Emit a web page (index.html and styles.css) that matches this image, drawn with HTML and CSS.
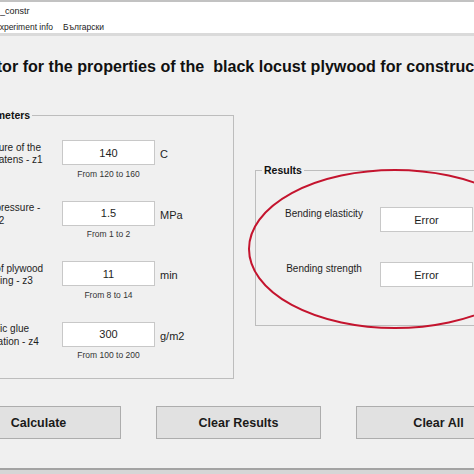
FILE: index.html
```html
<!DOCTYPE html>
<html>
<head>
<meta charset="utf-8">
<link rel="stylesheet" href="styles.css">
</head>
<body>
<div class="titlebar">
  <div class="apptitle">_constr</div>
  <div class="menubar"><span class="menuitem first">Experiment info</span><span class="menuitem">Български</span></div>
</div>
<div class="panel">
  <div class="window">
    <h1 class="heading">Calculator for the properties of the&nbsp; black locust plywood for construction</h1>
    <div class="groups">
      <fieldset class="group params">
        <legend>Parameters</legend>
        <div class="rows">
          <div class="row">
            <div class="lbl"><span>Temperature of the</span><span>heating platens - z1</span></div>
            <div class="field"><div class="box">140</div><div class="hint">From 120 to 160</div></div>
            <div class="unit">C</div>
          </div>
          <div class="row">
            <div class="lbl"><span>Specific pressure -</span><span>z2</span></div>
            <div class="field"><div class="box">1.5</div><div class="hint">From 1 to 2</div></div>
            <div class="unit">MPa</div>
          </div>
          <div class="row">
            <div class="lbl"><span>Duration of plywood</span><span>processing - z3</span></div>
            <div class="field"><div class="box">11</div><div class="hint">From 8 to 14</div></div>
            <div class="unit">min</div>
          </div>
          <div class="row">
            <div class="lbl"><span>Phenolic glue</span><span>concentration - z4</span></div>
            <div class="field"><div class="box">300</div><div class="hint">From 100 to 200</div></div>
            <div class="unit">g/m2</div>
          </div>
        </div>
      </fieldset>
      <fieldset class="group results">
        <legend>Results</legend>
        <div class="rrows">
          <div class="rrow">
            <div class="rlbl">Bending elasticity</div>
            <div class="box">Error</div>
          </div>
          <div class="rrow">
            <div class="rlbl">Bending strength</div>
            <div class="box">Error</div>
          </div>
        </div>
      </fieldset>
    </div>
    <div class="buttons">
      <div class="btn">Calculate</div>
      <div class="btn">Clear Results</div>
      <div class="btn">Clear All</div>
    </div>
  </div>
</div>
<svg class="annot" width="474" height="474" viewBox="0 0 474 474">
  <ellipse cx="395" cy="249" rx="146" ry="79" fill="none" stroke="#c4142e" stroke-width="2"/>
</svg>
</body>
</html>
```
FILE: styles.css
```css
html, body {
  margin: 0;
  padding: 0;
}
body {
  width: 474px;
  height: 474px;
  overflow: hidden;
  position: relative;
  background: #d6d6d6;
  font-family: "Liberation Sans", Arial, sans-serif;
  color: #1e1e1e;
}
.titlebar {
  background: #ffffff;
  border-top: 2px solid #c2c2c2;
  border-bottom: 3px solid #dadada;
  padding-top: 3px;
  box-sizing: content-box;
  height: 28px;
}
.apptitle {
  font-size: 9px;
  line-height: 12px;
  color: #222;
  white-space: nowrap;
}
.menubar {
  margin-top: 4px;
  font-size: 8.5px;
  line-height: 12px;
  color: #222;
  white-space: nowrap;
  display: flex;
  gap: 10px;
}
.menuitem.first {
  margin-left: -6px;
}
.panel {
  height: 432px;
  background: #f0f0f0;
  border-bottom: 2px solid #a3a3a3;
  overflow: hidden;
}
.window {
  margin-left: -54px;
  width: 620px;
}
.heading {
  margin: 20.5px 0 0 -6.5px;
  font-size: 16.1px;
  font-weight: bold;
  line-height: 18px;
  white-space: nowrap;
  color: #111;
}
.groups {
  display: flex;
  align-items: flex-start;
  margin-top: 34.5px;
}
.group {
  margin: 0;
  border: 1px solid #bdbdbd;
  box-sizing: border-box;
  min-width: 0;
}
.group legend {
  margin-left: 6px;
  padding: 0 2px;
  font-size: 10.5px;
  font-weight: bold;
  line-height: 12px;
  color: #111;
}
.params {
  width: 268px;
  margin-left: 20px;
  padding: 19px 0 18px 0;
}
.params legend {
  margin-left: 4px;
}
.results {
  width: 240px;
  margin-left: 21px;
  margin-top: 55px;
  padding: 31px 0 38px 0;
}
.rows {
  display: flex;
  flex-direction: column;
  gap: 22px;
}
.row {
  display: flex;
  align-items: flex-start;
  margin-left: -18px;
}
.lbl {
  width: 100px;
  height: 25px;
  margin-right: 13px;
  padding-top: 3px;
  box-sizing: border-box;
  display: flex;
  flex-direction: column;
  justify-content: center;
  align-items: center;
  font-size: 10px;
  line-height: 12.5px;
  white-space: nowrap;
}
.field {
  width: 93px;
  display: flex;
  flex-direction: column;
  align-items: center;
}
.box {
  width: 93px;
  height: 25px;
  box-sizing: border-box;
  background: #ffffff;
  border: 1px solid #c8c8c8;
  display: flex;
  align-items: center;
  justify-content: center;
  font-size: 11px;
  color: #1e1e1e;
  flex: none;
}
.hint {
  margin-top: 3.5px;
  font-size: 8.5px;
  line-height: 10px;
  color: #333;
  white-space: nowrap;
}
.unit {
  margin-left: 5px;
  padding-top: 2px;
  font-size: 11px;
  line-height: 25px;
  white-space: nowrap;
}
.rrows {
  display: flex;
  flex-direction: column;
  gap: 30px;
}
.rrow {
  display: flex;
  align-items: flex-start;
}
.rlbl {
  width: 100px;
  margin-left: 18px;
  margin-right: 6px;
  text-align: center;
  font-size: 10px;
  line-height: 13px;
  white-space: nowrap;
}
.buttons {
  display: flex;
  gap: 35px;
  margin-top: 27px;
  margin-left: 10px;
}
.btn {
  width: 165px;
  height: 33px;
  box-sizing: border-box;
  background: #e1e1e1;
  border: 1px solid #adadad;
  display: flex;
  align-items: center;
  justify-content: center;
  font-size: 12.5px;
  font-weight: bold;
  color: #1a1a1a;
  flex: none;
}
.annot {
  position: absolute;
  left: 0;
  top: 0;
  pointer-events: none;
}
```
